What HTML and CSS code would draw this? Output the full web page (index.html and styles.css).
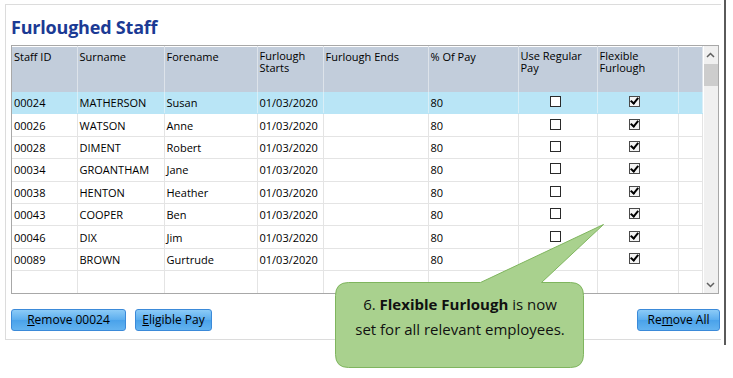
FILE: index.html
```html
<!DOCTYPE html>
<html>
<head>
<meta charset="utf-8">
<link rel="stylesheet" href="styles.css">
</head>
<body>
<div class="frame">
  <div class="panel">
    <h1 class="title">Furloughed Staff</h1>
    <div class="grid">
      <table class="table">
        <colgroup>
          <col style="width:65px"><col style="width:87px"><col style="width:93px"><col style="width:66px"><col style="width:105px"><col style="width:90px"><col style="width:79px"><col style="width:81px"><col style="width:24px">
        </colgroup>
        <thead>
          <tr>
            <th>Staff ID</th><th>Surname</th><th>Forename</th><th><span class="l">Furlough</span><span class="l">Starts</span></th><th>Furlough Ends</th><th>% Of Pay</th><th><span class="l">Use Regular</span><span class="l">Pay</span></th><th><span class="l">Flexible</span><span class="l">Furlough</span></th><th></th>
          </tr>
        </thead>
        <tbody>
          <tr class="sel"><td>00024</td><td>MATHERSON</td><td>Susan</td><td>01/03/2020</td><td></td><td>80</td><td class="c"><span class="cb"></span></td><td class="c"><span class="cb on"></span></td><td></td></tr>
          <tr><td>00026</td><td>WATSON</td><td>Anne</td><td>01/03/2020</td><td></td><td>80</td><td class="c"><span class="cb"></span></td><td class="c"><span class="cb on"></span></td><td></td></tr>
          <tr><td>00028</td><td>DIMENT</td><td>Robert</td><td>01/03/2020</td><td></td><td>80</td><td class="c"><span class="cb"></span></td><td class="c"><span class="cb on"></span></td><td></td></tr>
          <tr><td>00034</td><td>GROANTHAM</td><td>Jane</td><td>01/03/2020</td><td></td><td>80</td><td class="c"><span class="cb"></span></td><td class="c"><span class="cb on"></span></td><td></td></tr>
          <tr><td>00038</td><td>HENTON</td><td>Heather</td><td>01/03/2020</td><td></td><td>80</td><td class="c"><span class="cb"></span></td><td class="c"><span class="cb on"></span></td><td></td></tr>
          <tr><td>00043</td><td>COOPER</td><td>Ben</td><td>01/03/2020</td><td></td><td>80</td><td class="c"><span class="cb"></span></td><td class="c"><span class="cb on"></span></td><td></td></tr>
          <tr><td>00046</td><td>DIX</td><td>Jim</td><td>01/03/2020</td><td></td><td>80</td><td class="c"><span class="cb"></span></td><td class="c"><span class="cb on"></span></td><td></td></tr>
          <tr><td>00089</td><td>BROWN</td><td>Gurtrude</td><td>01/03/2020</td><td></td><td>80</td><td class="c"></td><td class="c"><span class="cb on"></span></td><td></td></tr>
          <tr class="empty"><td></td><td></td><td></td><td></td><td></td><td></td><td></td><td></td><td></td></tr>
        </tbody>
      </table>
      <div class="scrollbar">
        <svg class="arrow" width="9" height="6" viewBox="0 0 9 6"><path d="M1 5 L4.5 1.5 L8 5" fill="none" stroke="#606060" stroke-width="1.5"/></svg>
        <div class="thumb"></div>
        <div class="track"></div>
        <svg class="arrow" width="9" height="6" viewBox="0 0 9 6"><path d="M1 1 L4.5 4.5 L8 1" fill="none" stroke="#606060" stroke-width="1.5"/></svg>
      </div>
    </div>
    <div class="buttons">
      <button class="btn wide"><u>R</u>emove 00024</button>
      <button class="btn"><u>E</u>ligible Pay</button>
      <span class="spacer"></span>
      <button class="btn all">Re<u>m</u>ove All</button>
    </div>
  </div>
</div>
<div class="callout">
  <svg class="bubble" width="280" height="150" viewBox="0 0 280 150">
    <path d="M13.5 58.5 H145.5 L268.5 0.5 L206.5 58.5 H235.5 Q248.5 58.5 248.5 71.5 V130.5 Q248.5 143.5 235.5 143.5 H13.5 Q0.5 143.5 0.5 130.5 V71.5 Q0.5 58.5 13.5 58.5 Z" fill="#a9d18e" stroke="#7fb55e" stroke-width="1"/>
  </svg>
  <p class="callout-text">6. <b>Flexible Furlough</b> is now<br>set for all relevant employees.</p>
</div>
</body>
</html>
```

FILE: styles.css
```css
html, body {
  margin: 0;
  padding: 0;
  background: #ffffff;
}
body {
  font-family: "Open Sans", "Noto Sans", sans-serif;
  color: #000;
  position: relative;
  width: 733px;
  height: 378px;
  overflow: hidden;
}
.frame {
  width: 726px;
  height: 345px;
  border-right: 2px solid #5a5a5a;
  padding: 4px 0 0 5px;
  box-sizing: border-box;
}
.panel {
  width: 716px;
  height: 336px;
  border: 1px solid #dcdcdc;
  border-right: none;
  padding: 0 0 0 5px;
  box-sizing: border-box;
  display: flex;
  flex-direction: column;
}
.title {
  margin: 10px 0 0 0;
  font-size: 18px;
  line-height: 24px;
  font-weight: 700;
  color: #1b3a94;
  height: 30px;
  letter-spacing: -0.2px;
}
.grid {
  display: flex;
  width: 708px;
  height: 249px;
  border: 1px solid #a8a8a8;
  box-sizing: border-box;
  background: #fff;
}
.table {
  border-collapse: collapse;
  table-layout: fixed;
  width: 690px;
  font-size: 11px;
  line-height: 13px;
}
.table th {
  background: #c2cddb;
  font-weight: 400;
  text-align: left;
  vertical-align: top;
  height: 45px;
  padding: 3px 2px 0 2px;
  box-sizing: border-box;
  border-right: 1px solid #dde3ea;
  border-top: 1px solid #fff;
  white-space: nowrap;
}
.table th .l {
  display: block;
  height: 12px;
  line-height: 12px;
}
.table td {
  height: 22.4px;
  padding: 0 2px;
  box-sizing: border-box;
  border-right: 1px solid #e4e4e4;
  border-bottom: 1px solid #e4e4e4;
  white-space: nowrap;
  vertical-align: middle;
}
.table tr.sel td {
  background: #b9e5f6;
  border-bottom-color: #b9e5f6;
  border-right-color: #d9eef7;
}
.table tr.empty td {
  border-bottom: none;
}
.table td.c {
  text-align: left;
  padding: 0 0 0 31px;
}
.cb {
  display: block;
  width: 11px;
  height: 11px;
  border: 1px solid #2a2a2a;
  background: #fff;
  box-sizing: border-box;
  position: relative;
  top: -1px;
}
.cb.on {
  border-color: #4a4a4a;
  background: #f4f4f4;
}
.cb.on::after {
  content: "";
  position: absolute;
  left: 2.5px;
  top: -0.5px;
  width: 3px;
  height: 6px;
  border-right: 2px solid #000;
  border-bottom: 2px solid #000;
  transform: rotate(40deg);
  transform-origin: center;
}
.scrollbar {
  width: 16px;
  background: #f0f0f0;
  display: flex;
  flex-direction: column;
  align-items: center;
  border-left: 1px solid #fff;
}
.scrollbar .arrow {
  margin: 6px 0 6px 0;
  flex: none;
}
.scrollbar .arrow:last-child {
  margin: 0 0 5px 0;
}
.thumb {
  width: 14px;
  height: 22px;
  background: #cdcdcd;
  flex: none;
}
.track {
  flex: 1;
}
.buttons {
  display: flex;
  align-items: center;
  margin-top: 15px;
  gap: 9px;
  width: 709px;
}
.btn {
  font-family: "Open Sans", "Noto Sans", sans-serif;
  font-size: 12px;
  height: 22px;
  padding: 0;
  margin: 0;
  border: 1px solid #3b8ad9;
  border-radius: 3px;
  background: linear-gradient(#8ccbf7, #5badee 50%, #4aa2ea 51%, #63b3f0);
  color: #000;
  width: 77px;
  line-height: 18px;
}
.btn.wide {
  width: 115px;
}
.btn.all {
  width: 83px;
}
.btn u {
  text-decoration: underline;
}
.spacer {
  flex: 1;
}
.callout {
  position: absolute;
  left: 335px;
  top: 224px;
  width: 280px;
  height: 150px;
}
.bubble {
  position: absolute;
  left: 0;
  top: 0;
}
.callout-text {
  position: absolute;
  left: 0;
  top: 68px;
  width: 250px;
  margin: 0;
  text-align: center;
  font-size: 15px;
  line-height: 25px;
  color: #111;
}
.callout-text b {
  font-weight: 700;
}
```
